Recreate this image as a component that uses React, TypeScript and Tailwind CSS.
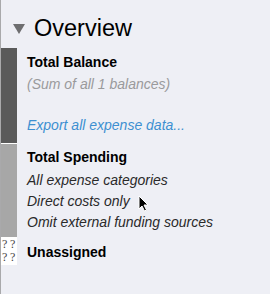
export default function App() {
  return (
    <div
      className="relative w-[270px] h-[294px] overflow-hidden bg-[#eeeff5] border-l border-[#a9a9ab] text-black"
      style={{ fontFamily: '"Liberation Sans", Arial, sans-serif' }}
    >
      {/* header */}
      <div className="flex items-center h-[48px] pl-[12px] pt-[10px] gap-[9px]">
        <svg width="12" height="10" viewBox="0 0 12 10">
          <path d="M0 0 L12 0 L6 10 Z" fill="#6e6e70" />
        </svg>
        <span className="text-[23.5px] leading-none">Overview</span>
      </div>

      {/* total balance */}
      <div className="flex h-[95px]">
        <div className="w-[16px] bg-[#5a5a5a] shrink-0" />
        <div className="flex flex-col pl-[10px] pt-[5px]">
          <span className="text-[14px] font-bold leading-[18px]">Total Balance</span>
          <span className="text-[14px] italic text-[#9a9a9c] leading-[18px] mt-[4px]">(Sum of all 1 balances)</span>
          <span className="text-[14px] italic text-[#3d8fd1] leading-[18px] mt-[23px]">Export all expense data...</span>
        </div>
      </div>

      <div className="w-[16px] h-px bg-white" />

      {/* total spending */}
      <div className="flex h-[93px]">
        <div className="w-[16px] bg-[#a7a7a7] shrink-0" />
        <div className="flex flex-col pl-[10px] pt-[4px]">
          <span className="text-[14px] font-bold leading-[18px]">Total Spending</span>
          <span className="text-[14px] italic text-[#2a2a2a] leading-[21px] mt-[4px]">All expense categories</span>
          <span className="text-[14px] italic text-[#2a2a2a] leading-[21px]">Direct costs only</span>
          <span className="text-[14px] italic text-[#2a2a2a] leading-[21px]">Omit external funding sources</span>
        </div>
      </div>

      {/* unassigned */}
      <div className="flex h-[28px]">
        <div
          className="w-[16px] h-[28px] bg-white shrink-0 grid grid-cols-[8px_8px] auto-rows-[13px] text-[12px] leading-[13px] text-[#444] pt-[1px] pl-[1px]"
          style={{ fontFamily: '"Liberation Serif", serif' }}
        >
          <span>?</span><span>?</span>
          <span>?</span><span>?</span>
        </div>
        <div className="flex items-center pl-[10px] pt-[2px]">
          <span className="text-[14px] font-bold">Unassigned</span>
        </div>
      </div>

      {/* mouse cursor */}
      <svg className="absolute left-[137px] top-[195px]" width="11" height="17" viewBox="0 0 11 17">
        <path d="M1 1 L1 14 L4 11 L6.5 16 L8.5 15 L6 10 L10 10 Z" fill="#000" stroke="#fff" strokeWidth="1" />
      </svg>
    </div>
  );
}
